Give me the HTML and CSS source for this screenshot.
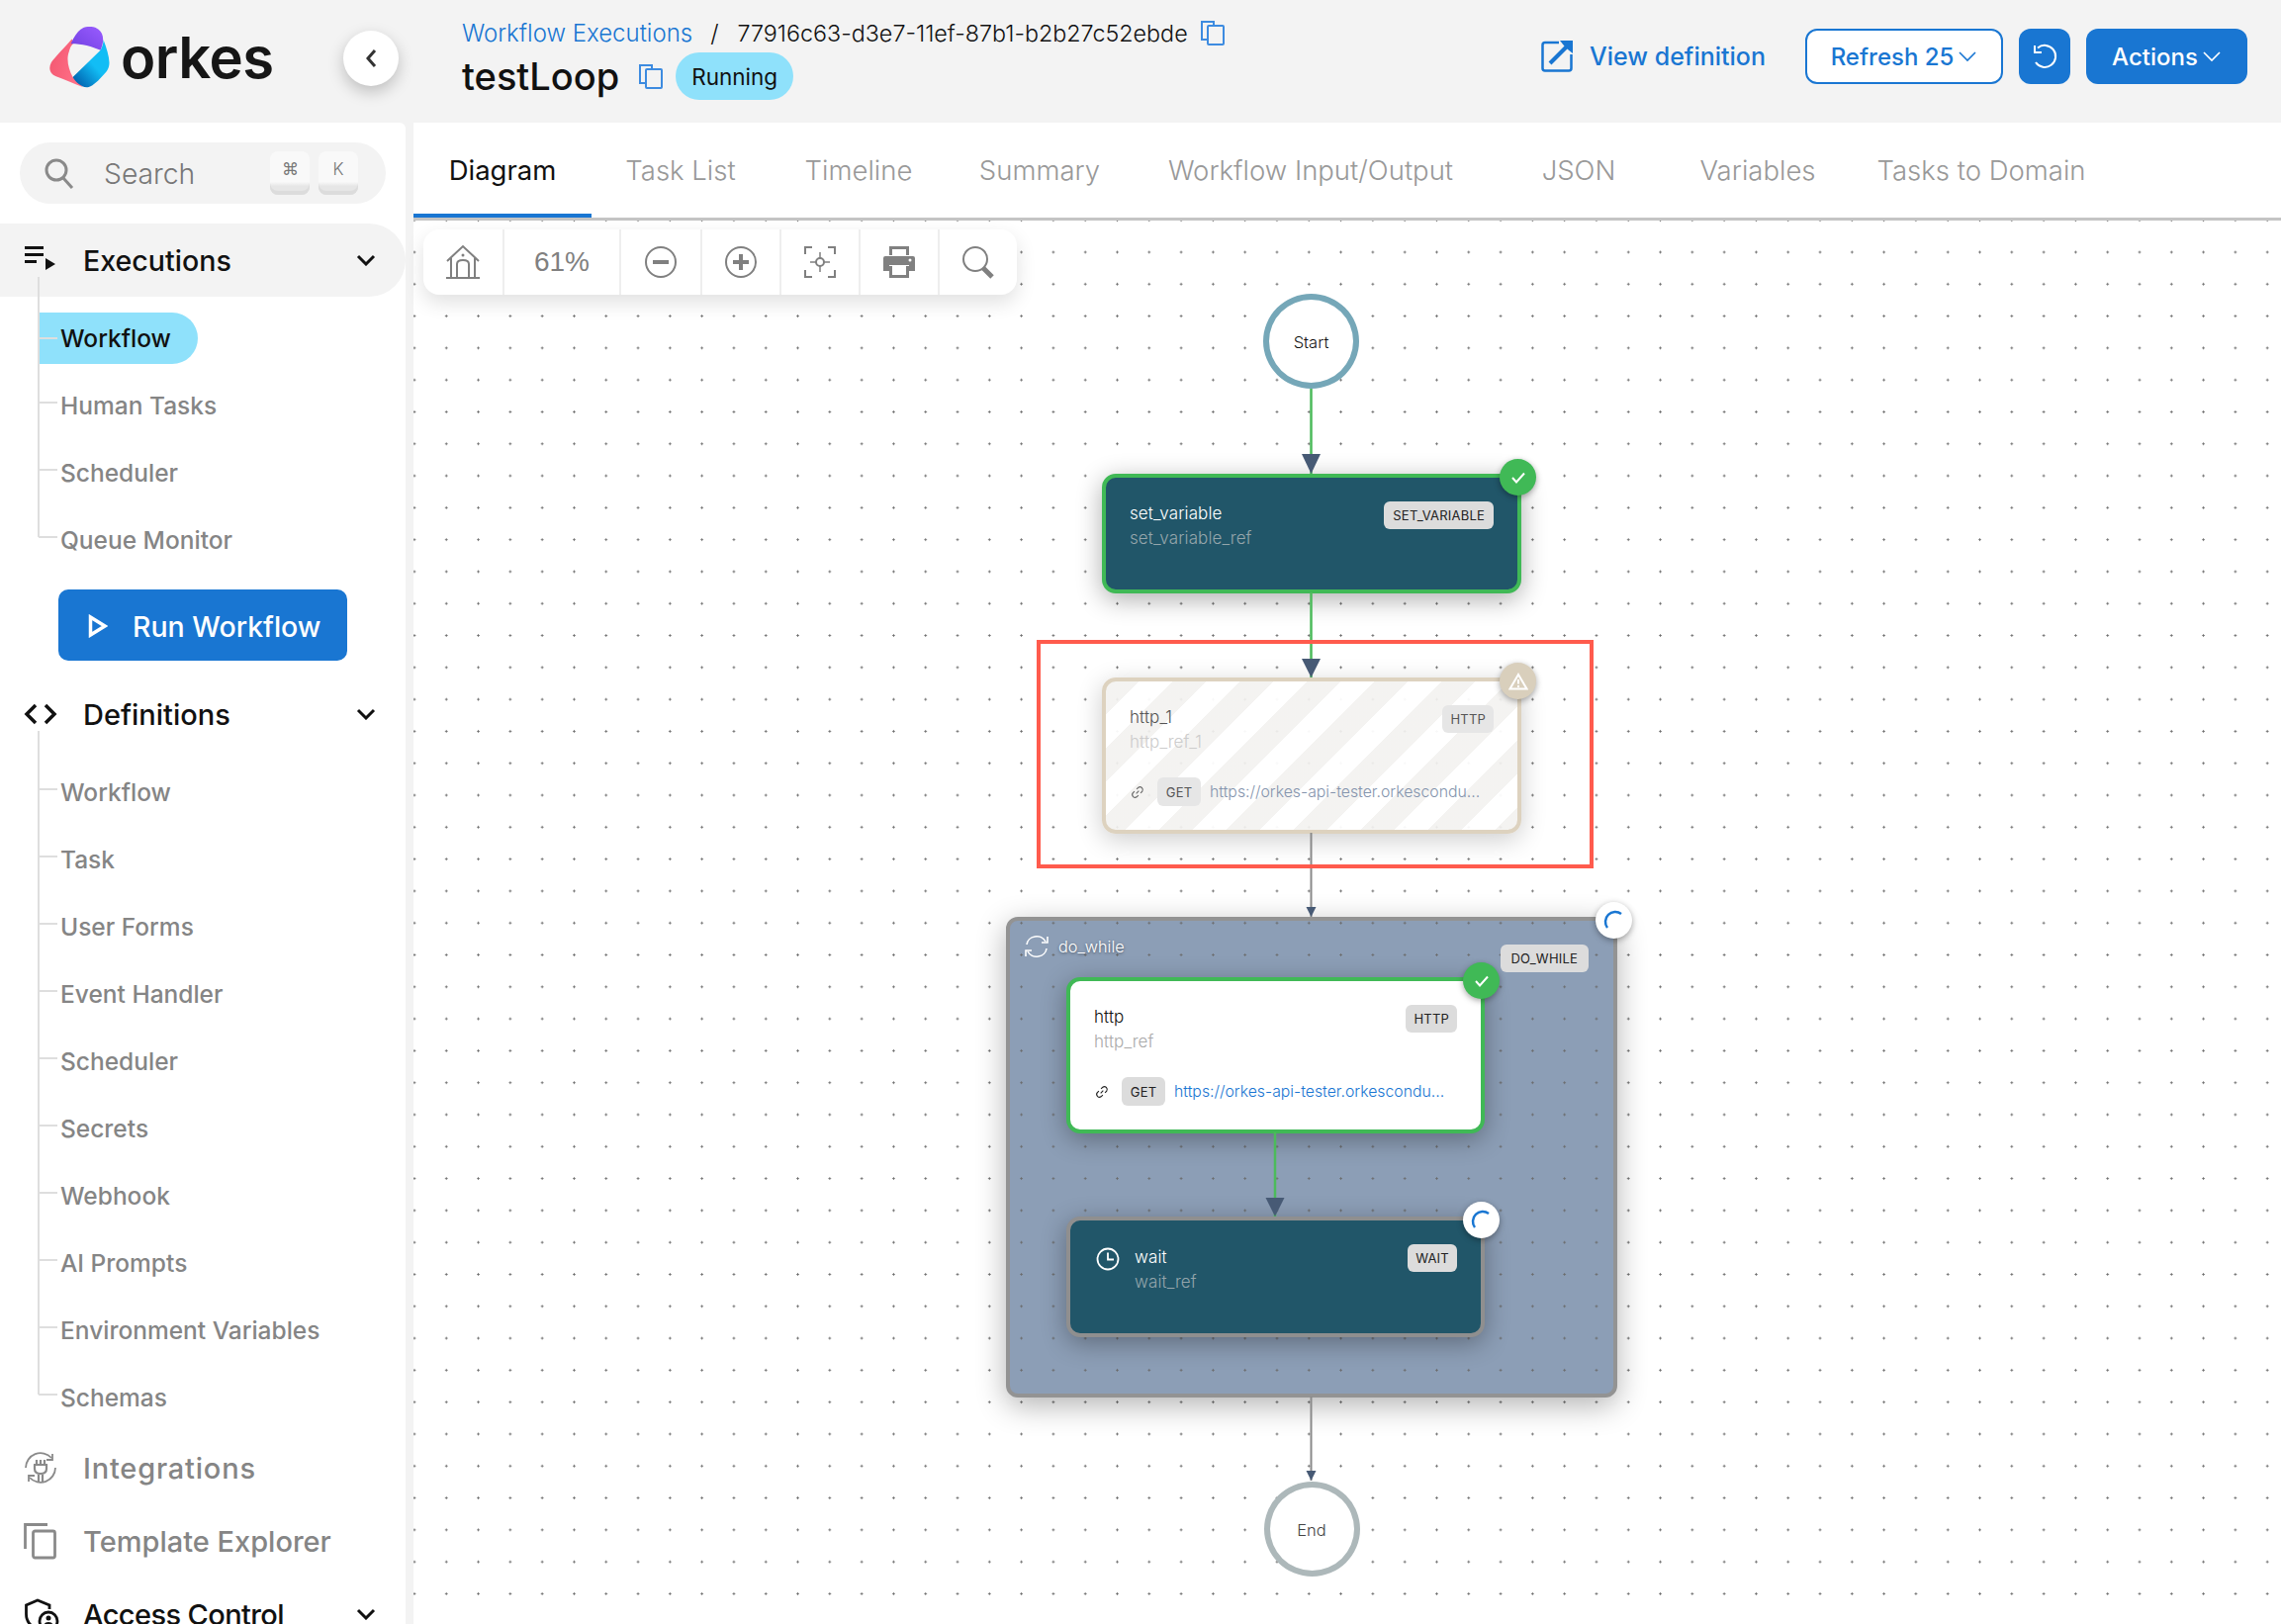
FILE: index.html
```html
<!DOCTYPE html>
<html lang="en">
<head>
    <meta charset="UTF-8">
    <meta name="viewport" content="width=device-width, initial-scale=1.0">
    <title>testLoop - Workflow Executions</title>
    <link rel="stylesheet" href="styles.css">
</head>
<body>
    <!-- Header -->
    <div class="header">
        <div class="brand">
            <svg class="logo-mark" viewBox="30 20 184 188">
                <defs>
                    <linearGradient id="logoPink" x1="0" y1="0" x2="1" y2="0.4"><stop offset="0" stop-color="#f2566f"/><stop offset="1" stop-color="#ff6f87"/></linearGradient>
                    <linearGradient id="logoPurple" x1="0" y1="1" x2="1" y2="0"><stop offset="0" stop-color="#6f3fe0"/><stop offset="1" stop-color="#9a5cff"/></linearGradient>
                    <linearGradient id="logoBlue" x1="0.8" y1="0.3" x2="0.2" y2="1"><stop offset="0.35" stop-color="#12bdf5"/><stop offset="1" stop-color="#0063b0"/></linearGradient>
                </defs>
                <path fill="url(#logoPink)" d="M98 58C72 88 46 114 35 130C26 146 30 165 50 172C80 183 105 195 132 205L101 175C88 150 80 120 90 95C92 88 96 75 105 70Z"/>
                <path fill="url(#logoBlue)" d="M195 60C205 85 212 110 213 130C213 148 205 158 195 168C180 185 165 200 150 205C130 210 110 190 101 175L186 92C192 80 195 70 195 60Z"/>
                <path fill="url(#logoPurple)" d="M95 72C105 50 115 35 125 28C140 17 165 17 180 28C195 40 199 62 186 92C160 80 130 72 95 72Z"/>
            </svg>
            <span class="logo-text">orkes</span>
        </div>
        <button class="collapse-btn">
            <svg width="14" height="22" viewBox="0 0 14 22" fill="none" stroke="#333" stroke-width="3"><path d="M11 3L4 11L11 19"/></svg>
        </button>
        <div class="title-block">
            <div class="breadcrumb">
                <a href="#">Workflow Executions</a>
                <span class="slash">/</span>
                <span class="run-id">77916c63-d3e7-11ef-87b1-b2b27c52ebde</span>
                <svg class="copy-icon" viewBox="0 0 26 26" fill="none" stroke="#3d8be0" stroke-width="2"><path d="M7 20H2V2H14V6"/><rect x="8" y="6" width="16" height="19" rx="1"/></svg>
            </div>
            <div class="title-row">
                <h1>testLoop</h1>
                <svg class="copy-icon" viewBox="0 0 26 26" fill="none" stroke="#3d8be0" stroke-width="2"><path d="M7 20H2V2H14V6"/><rect x="8" y="6" width="16" height="19" rx="1"/></svg>
                <span class="status-pill">Running</span>
            </div>
        </div>
        <div class="header-actions">
            <a class="view-def" href="#">
                <svg width="32" height="32" viewBox="0 0 32 32" fill="none" stroke="#1976d2" stroke-width="2.5"><path d="M18 2H4Q1.5 2 1.5 4.5V28Q1.5 30.5 4 30.5H28Q30.500 30.500 30.500 28V14"/><path stroke-width="4" d="M9 23L27 5"/><path fill="#1976d2" stroke="none" d="M19 0H32V13L27 9L23 5Z"/></svg>
                View definition
            </a>
            <button class="btn btn-outline">Refresh 25<svg class="btn-chevron" viewBox="0 0 20 12" fill="none" stroke="#1976d2" stroke-width="1.6"><path d="M2 2L10 10L18 2"/></svg></button>
            <button class="btn btn-primary btn-icon">
                <svg width="28" height="28" viewBox="0 0 28 28" fill="none" stroke="#fff" stroke-width="2"><path d="M7 5.500A11 11 0 1 1 5 20"/><path d="M4 3V10H11"/></svg>
            </button>
            <button class="btn btn-primary btn-actions">Actions<svg class="btn-chevron" viewBox="0 0 20 12" fill="none" stroke="#fff" stroke-width="1.6"><path d="M2 2L10 10L18 2"/></svg></button>
        </div>
    </div>

    <div class="page">
        <!-- Sidebar -->
        <div class="sidebar">
            <div class="search">
                <svg width="32" height="32" viewBox="0 0 32 32" fill="none" stroke="#8a8a8a" stroke-width="3"><circle cx="13" cy="13" r="10"/><path d="M20 21L29 31"/></svg>
                <span class="search-label">Search</span>
                <span class="kbd kbd-first">⌘</span>
                <span class="kbd">K</span>
            </div>

            <div class="nav-row nav-open">
                <svg class="nav-icon" viewBox="0 0 32 32"><path fill="#111" d="M0 2H19V5H0ZM0 9H19V12H0ZM0 16H12V19H0ZM21 14L31 20L21 26Z"/></svg>
                <span>Executions</span>
                <svg class="nav-chevron" viewBox="0 0 20 12" fill="none" stroke="#111" stroke-width="3"><path d="M2 2L10 10L18 2"/></svg>
            </div>
            <div class="subnav">
                <div class="subnav-item active"><span>Workflow</span></div>
                <div class="subnav-item"><span>Human Tasks</span></div>
                <div class="subnav-item"><span>Scheduler</span></div>
                <div class="subnav-item"><span>Queue Monitor</span></div>
            </div>

            <button class="run-btn">
                <svg width="20" height="24" viewBox="0 0 20 24" fill="none" stroke="#fff" stroke-width="3.500"><path d="M2.500 3L17 12L2.500 21Z"/></svg>
                Run Workflow
            </button>

            <div class="nav-row nav-definitions">
                <svg class="nav-icon" viewBox="0 0 32 32" fill="none" stroke="#111" stroke-width="3.500"><path d="M11 7L2 16L11 25M21 7L30 16L21 25"/></svg>
                <span>Definitions</span>
                <svg class="nav-chevron" viewBox="0 0 20 12" fill="none" stroke="#111" stroke-width="3"><path d="M2 2L10 10L18 2"/></svg>
            </div>
            <div class="subnav">
                <div class="subnav-item"><span>Workflow</span></div>
                <div class="subnav-item"><span>Task</span></div>
                <div class="subnav-item"><span>User Forms</span></div>
                <div class="subnav-item"><span>Event Handler</span></div>
                <div class="subnav-item"><span>Scheduler</span></div>
                <div class="subnav-item"><span>Secrets</span></div>
                <div class="subnav-item"><span>Webhook</span></div>
                <div class="subnav-item"><span>AI Prompts</span></div>
                <div class="subnav-item"><span>Environment Variables</span></div>
                <div class="subnav-item"><span>Schemas</span></div>
            </div>

            <div class="nav-row nav-muted">
                <svg class="nav-icon" viewBox="0 0 32 32" fill="none" stroke="#8a8a8a" stroke-width="1.800"><path d="M1 16A15 15 0 0 1 27 6"/><path d="M31 16A15 15 0 0 1 5 26"/><path d="M28 2V8H22M4 30V24H10"/><path stroke-width="2.200" d="M9 13H23M12 8V13M16 8V13M20 8V13M10 13V17Q10 22 16 22Q22 22 22 17V13M14 22V31M18 22V31"/></svg>
                <span class="nav-wide">Integrations</span>
            </div>
            <div class="nav-row nav-muted">
                <svg class="nav-icon" viewBox="0 0 32 32" fill="none" stroke="#8a8a8a" stroke-width="2.800"><path d="M0.500 24V-0.500H23"/><rect x="8.500" y="6" width="22" height="27" rx="2"/></svg>
                <span>Template Explorer</span>
            </div>
            <div class="nav-row">
                <svg class="nav-icon" viewBox="0 0 32 32" fill="none" stroke="#111" stroke-width="2.800"><path d="M25 11V7L13 2L1.500 7V16Q1.500 25 10 30"/><circle cx="24" cy="23" r="9"/><circle cx="24" cy="20" r="2.500" fill="#111" stroke="none"/><path fill="#111" stroke="none" d="M19 29Q19 24 24 24Q29 24 29 29Z"/></svg>
                <span class="nav-narrow">Access Control</span>
                <svg class="nav-chevron" viewBox="0 0 20 12" fill="none" stroke="#111" stroke-width="3"><path d="M2 2L10 10L18 2"/></svg>
            </div>
        </div>

        <!-- Main area -->
        <div class="main">
            <div class="tabs">
                <div class="tab active">Diagram</div>
                <div class="tab">Task List</div>
                <div class="tab">Timeline</div>
                <div class="tab">Summary</div>
                <div class="tab">Workflow Input/Output</div>
                <div class="tab">JSON</div>
                <div class="tab">Variables</div>
                <div class="tab">Tasks to Domain</div>
            </div>

            <div class="canvas">
                <!-- Diagram toolbar -->
                <div class="toolbar">
                    <div class="tool tool-home">
                        <svg width="36" height="36" viewBox="0 0 36 36" fill="none" stroke="#808080" stroke-width="2"><path d="M2 17L18 2L34 17"/><path d="M6 14V33M30 14V33M1 34H35M12 33V20Q12 16 18 16Q24 16 24 20V33"/><circle cx="18" cy="11" r="1.500" fill="#808080" stroke="none"/></svg>
                    </div>
                    <div class="tool tool-zoom">61%</div>
                    <div class="tool tool-wide">
                        <svg width="34" height="34" viewBox="0 0 34 34" fill="none" stroke="#808080" stroke-width="2"><circle cx="17" cy="17" r="15"/><path stroke-width="4" d="M9 17H25"/></svg>
                    </div>
                    <div class="tool">
                        <svg width="34" height="34" viewBox="0 0 34 34" fill="none" stroke="#808080" stroke-width="2"><circle cx="17" cy="17" r="15"/><path stroke-width="4" d="M9 17H25M17 9V25"/></svg>
                    </div>
                    <div class="tool">
                        <svg width="34" height="34" viewBox="0 0 34 34" fill="none" stroke="#808080" stroke-width="2"><path d="M2 9V2H9M25 2H32V9M2 25V32H9M25 32H32V25"/><circle cx="17" cy="17" r="4"/><path stroke-width="1.500" d="M17 7V13M17 21V27M7 17H13M21 17H27"/></svg>
                    </div>
                    <div class="tool">
                        <svg width="34" height="34" viewBox="0 0 34 34"><path fill="#808080" d="M7 1H27V10H24V4H10V10H7ZM3 11H31Q33 11 33 13V26H27V20H7V26H1V13Q1 11 3 11Z"/><path fill="none" stroke="#808080" stroke-width="3" d="M8.500 21V31.500H25.500V21"/><circle cx="28" cy="15" r="1.500" fill="#fff"/></svg>
                    </div>
                    <div class="tool tool-last">
                        <svg width="34" height="34" viewBox="0 0 34 34" fill="none" stroke="#808080" stroke-width="2"><circle cx="14" cy="14" r="12"/><path stroke-width="5" d="M22 23L31 32"/></svg>
                    </div>
                </div>

                <!-- Terminal nodes -->
                <div class="terminal terminal-start">Start</div>
                <div class="terminal terminal-end">End</div>

                <!-- set_variable -->
                <div class="node node-dark node-done node-set">
                    <div class="node-head">
                        <div>
                            <div class="node-name">set_variable</div>
                            <div class="node-ref">set_variable_ref</div>
                        </div>
                        <span class="badge">SET_VARIABLE</span>
                    </div>
                    <span class="status status-done">
                        <svg width="16" height="14" viewBox="0 0 16 14" fill="none" stroke="#fff" stroke-width="2"><path d="M2 7L6 11.500L14 2.500"/></svg>
                    </span>
                </div>

                <!-- http_1, skipped -->
                <div class="node node-skipped node-http1">
                    <div class="node-head">
                        <div>
                            <div class="node-name">http_1</div>
                            <div class="node-ref">http_ref_1</div>
                        </div>
                        <span class="badge">HTTP</span>
                    </div>
                    <div class="node-link">
                        <svg class="link-icon" viewBox="0 0 16 16" fill="none" stroke="#666" stroke-width="1.300"><path d="M6.500 9.500L9.500 6.500"/><path d="M7 4.500L9 2.500Q11 1 13 2.800Q15 5 13.500 7L11.500 9"/><path d="M9 11.500L7 13.500Q5 15 3 13.200Q1 11 2.500 9L4.500 7"/></svg>
                        <span class="badge">GET</span>
                        <span class="node-url">https://orkes-api-tester.orkescondu...</span>
                    </div>
                    <span class="status status-warn">
                        <svg width="20" height="18" viewBox="0 0 20 18" fill="none" stroke="#fff" stroke-width="2"><path d="M10 2L18.500 16.500H1.500Z"/><path d="M10 7V11.500M10 13V15"/></svg>
                    </span>
                </div>

                <!-- do_while container -->
                <div class="node-loop">
                    <div class="loop-title">
                        <svg width="26" height="24" viewBox="0 0 26 24" fill="none" stroke="#fff" stroke-width="1.600"><path d="M3 10A10 9 0 0 1 22 7M23 14A10 9 0 0 1 4 17"/><path d="M24 2V8H18M2 22V16H8"/></svg>
                        <span>do_while</span>
                    </div>
                    <span class="badge">DO_WHILE</span>
                    <span class="status status-run">
                        <svg width="22" height="22" viewBox="0 0 22 22" fill="none" stroke="#1976d2" stroke-width="2.500"><path d="M4 18A10 10 0 0 1 18 4"/></svg>
                    </span>
                </div>

                <!-- http -->
                <div class="node node-done node-http">
                    <div class="node-head">
                        <div>
                            <div class="node-name">http</div>
                            <div class="node-ref">http_ref</div>
                        </div>
                        <span class="badge">HTTP</span>
                    </div>
                    <div class="node-link">
                        <svg class="link-icon" viewBox="0 0 16 16" fill="none" stroke="#222" stroke-width="1.300"><path d="M6.500 9.500L9.500 6.500"/><path d="M7 4.500L9 2.500Q11 1 13 2.800Q15 5 13.500 7L11.500 9"/><path d="M9 11.500L7 13.500Q5 15 3 13.200Q1 11 2.500 9L4.500 7"/></svg>
                        <span class="badge">GET</span>
                        <span class="node-url">https://orkes-api-tester.orkescondu...</span>
                    </div>
                    <span class="status status-done">
                        <svg width="16" height="14" viewBox="0 0 16 14" fill="none" stroke="#fff" stroke-width="2"><path d="M2 7L6 11.500L14 2.500"/></svg>
                    </span>
                </div>

                <!-- wait -->
                <div class="node node-dark node-wait">
                    <div class="node-head">
                        <div class="node-with-icon">
                            <svg width="24" height="24" viewBox="0 0 24 24" fill="none" stroke="#fff" stroke-width="1.800"><circle cx="12" cy="12" r="10.500"/><path d="M12 5.500V12.500H18"/></svg>
                            <div>
                                <div class="node-name">wait</div>
                                <div class="node-ref">wait_ref</div>
                            </div>
                        </div>
                        <span class="badge">WAIT</span>
                    </div>
                    <span class="status status-run">
                        <svg width="22" height="22" viewBox="0 0 22 22" fill="none" stroke="#1976d2" stroke-width="2.500"><path d="M4 18A10 10 0 0 1 18 4"/></svg>
                    </span>
                </div>

                <!-- Edges -->
                <svg class="edges" viewBox="0 0 1888 1419">
                    <g stroke-width="2.500" stroke="#4cbb5b">
                        <path d="M907.500 170V256M907.500 376V462M871 922V1007"/>
                    </g>
                    <g stroke-width="2" stroke="#8a8a8a">
                        <path d="M907.500 619V704M907.500 1189V1274"/>
                    </g>
                    <g fill="#475a75">
                        <path d="M898 236H917L907.500 256Z"/>
                        <path d="M898 443H917L907.500 462Z"/>
                        <path d="M902.500 694H912.500L907.500 704Z"/>
                        <path d="M861.500 988H880.500L871 1007Z"/>
                        <path d="M902.500 1264H912.500L907.500 1274Z"/>
                    </g>
                </svg>

                <!-- Highlight box -->
                <div class="highlight"></div>
            </div>
        </div>
    </div>
</body>
</html>
```

FILE: styles.css
```css
:root {
    --dots: radial-gradient(circle, #6a6a6a 0.9px, transparent 1.3px);
    --blue: #1976d2;
}

* {
    box-sizing: border-box;
}

body {
    margin: 0;
    height: 1642px;
    overflow: hidden;
    background-color: #f3f3f3;
    font-family: Inter, "Liberation Sans", sans-serif;
    color: #111;
}

/* Header */
.header {
    display: flex;
    align-items: center;
    height: 124px;
    padding: 0 34px 8px 50px;
}

.brand {
    display: flex;
    align-items: center;
    gap: 11px;
    width: 297px;
}

.logo-mark {
    width: 61px;
    height: 62px;
}

.logo-text {
    font-size: 58px;
    font-weight: 600;
    line-height: 62px;
    color: #161616;
    letter-spacing: -0.5px;
}

.collapse-btn {
    display: flex;
    align-items: center;
    justify-content: center;
    width: 56px;
    height: 56px;
    margin: 2px 64px 0 0;
    padding: 0;
    border: none;
    border-radius: 50%;
    background-color: #fff;
    box-shadow: 0 6px 16px rgba(0, 0, 0, 0.22);
}

.title-block {
    flex: 1;
    margin-top: 3px;
}

.breadcrumb {
    display: flex;
    align-items: center;
    height: 30px;
    margin-bottom: 5px;
    font-size: 24px;
    font-weight: 300;
}

.breadcrumb a {
    color: var(--blue);
    text-decoration: none;
}

.slash {
    margin: 0 19px 0 18px;
}

.run-id {
    font-size: 23.3px;
}

.copy-icon {
    width: 26px;
    height: 26px;
}

.breadcrumb .copy-icon {
    margin-left: 12px;
}

.title-row {
    display: flex;
    align-items: center;
    height: 48px;
}

h1 {
    margin: 0 19px 0 0;
    font-size: 38px;
    font-weight: 500;
}

.status-pill {
    display: flex;
    align-items: center;
    height: 48px;
    margin-left: 12px;
    padding: 0 16px;
    border-radius: 24px;
    background-color: #8fe1fb;
    font-size: 22.5px;
}

.header-actions {
    display: flex;
    align-items: center;
    gap: 16px;
    margin-top: -2px;
}

.view-def {
    display: flex;
    align-items: center;
    gap: 17px;
    margin-right: 24px;
    color: var(--blue);
    text-decoration: none;
    font-size: 25px;
    font-weight: 500;
}

.btn {
    display: flex;
    align-items: center;
    justify-content: center;
    gap: 4px;
    height: 56px;
    padding: 0;
    border-radius: 12px;
    font-family: inherit;
    font-size: 24px;
    font-weight: 500;
}

.btn-outline {
    width: 200px;
    border: 2px solid var(--blue);
    background-color: #fff;
    color: var(--blue);
}

.btn-primary {
    border: none;
    background-color: var(--blue);
    color: #fff;
}

.btn-icon {
    width: 52px;
}

.btn-actions {
    width: 163px;
}

.btn-chevron {
    width: 20px;
    height: 12px;
}

/* Page layout */
.page {
    display: flex;
    gap: 8px;
    height: 1518px;
}

/* Sidebar */
.sidebar {
    width: 410px;
    padding-top: 20px;
    overflow: hidden;
    background-color: #fff;
    border-radius: 0 6px 0 0;
}

.search {
    display: flex;
    align-items: center;
    height: 62px;
    margin: 0 20px;
    padding-left: 24px;
    border-radius: 31px;
    background-color: #f3f3f3;
}

.search-label {
    flex: 1;
    margin-left: 29px;
    padding-top: 2px;
    font-size: 28.3px;
    font-weight: 300;
    color: #777;
}

.kbd {
    display: flex;
    align-items: center;
    justify-content: center;
    width: 40px;
    height: 44px;
    margin-right: 28px;
    padding-bottom: 8px;
    border-radius: 8px;
    background: linear-gradient(#f9f9f9 70%, #e6e6e6 80%);
    box-shadow: inset 0 -4px 0 #dcdcdc;
    font-size: 17px;
    font-weight: 300;
    color: #777;
}

.kbd-first {
    margin-right: 9px;
    font-family: "DejaVu Sans", sans-serif;
}

.nav-row {
    display: flex;
    align-items: center;
    height: 74px;
    padding: 0 30px 0 25px;
    font-size: 29px;
    font-weight: 500;
}

.nav-open {
    margin-top: 20px;
    border-radius: 0 37px 37px 0;
    background-color: #f3f3f3;
    font-size: 28.6px;
}

.nav-definitions {
    margin-top: 17px;
}

.nav-muted {
    color: #858585;
}

.nav-wide {
    letter-spacing: 0.8px;
}

.nav-narrow {
    letter-spacing: -0.6px;
}

.nav-icon {
    flex: none;
    width: 32px;
    height: 32px;
    margin-right: 27px;
    overflow: visible;
}

.nav-chevron {
    width: 20px;
    height: 12px;
    margin-left: auto;
}

.subnav {
    position: relative;
    margin-top: 8px;
}

.subnav::before {
    content: "";
    position: absolute;
    left: 38px;
    top: -28px;
    bottom: 37px;
    width: 2px;
    background-color: #dedede;
}

.subnav-item {
    position: relative;
    display: flex;
    align-items: center;
    height: 68px;
    margin-left: 40px;
    font-size: 24.5px;
    font-weight: 500;
    color: #858585;
}

.subnav-item::before {
    content: "";
    position: absolute;
    left: -1px;
    top: 30px;
    width: 19px;
    height: 2px;
    background-color: #dedede;
}

.subnav-item span {
    padding-left: 21px;
}

.subnav-item.active span {
    display: flex;
    align-items: center;
    height: 52px;
    padding-right: 27px;
    border-radius: 0 26px 26px 0;
    background-color: #8fe1fb;
    color: #111;
}

.subnav-item.active::before {
    top: 33px;
}

.run-btn {
    display: flex;
    align-items: center;
    gap: 25px;
    width: 292px;
    height: 72px;
    margin: 16px 0 0 59px;
    padding: 2px 0 0 30px;
    border: none;
    border-radius: 10px;
    background-color: var(--blue);
    color: #fff;
    font-family: inherit;
    font-size: 28.5px;
    font-weight: 500;
}

/* Main */
.main {
    display: flex;
    flex-direction: column;
    flex: 1;
    background-color: #fff;
}

.tabs {
    display: grid;
    grid-template-columns: 180px 180px 180px 186px 362px 180px 182px 270px;
    height: 99px;
    border-bottom: 3px solid #c4c4c4;
}

.tab {
    height: 96px;
    padding-top: 31px;
    text-align: center;
    font-size: 27.5px;
    font-weight: 300;
    color: #999;
}

.tab.active {
    border-bottom: 4px solid var(--blue);
    font-weight: 400;
    color: #111;
}

.canvas {
    position: relative;
    flex: 1;
    background-image: var(--dots);
    background-size: 32.3px 32.3px;
    background-position: 15.25px 12.75px;
    background-attachment: fixed;
}

.toolbar {
    position: absolute;
    left: 10px;
    top: 9px;
    display: flex;
    height: 66px;
    border-radius: 16px;
    background-color: #fff;
    box-shadow: 0 8px 20px rgba(0, 0, 0, 0.12);
}

.tool {
    display: flex;
    align-items: center;
    justify-content: center;
    width: 80px;
    border-right: 2px solid #eee;
}

.tool-home {
    width: 82px;
}

.tool-zoom {
    width: 118px;
    font-family: "Liberation Sans", sans-serif;
    font-size: 28px;
    color: #808080;
}

.tool-wide {
    width: 82px;
}

.tool-last {
    width: 78px;
    border-right: none;
}

/* Diagram nodes */
.terminal {
    position: absolute;
    display: flex;
    align-items: center;
    justify-content: center;
    width: 97px;
    height: 96px;
    padding-top: 2px;
    border: 6px solid #75a7b8;
    border-radius: 50%;
    background-color: #fff;
    font-size: 16.5px;
    font-weight: 300;
}

.terminal-start {
    left: 859px;
    top: 74px;
}

.terminal-end {
    left: 859.5px;
    top: 1275px;
    border-color: #adb8ba;
    color: #444;
}

.node {
    position: absolute;
    padding: 24px;
    border: 4px solid #8f8f8f;
    border-radius: 14px;
    background-color: #fff;
    box-shadow: 0 6px 26px rgba(0, 0, 0, 0.32);
    font-weight: 300;
}

.node-dark {
    background-color: #215669;
    color: #fff;
}

.node-done {
    border-color: #40b956;
}

.node-skipped {
    border-color: #ddd2bf;
    background: repeating-linear-gradient(135deg, rgba(243, 242, 240, 0.92) 0 24px, rgba(255, 255, 255, 0.95) 24px 48px);
    box-shadow: 0 6px 26px rgba(0, 0, 0, 0.2);
    color: #555;
}

.node-set {
    left: 696px;
    top: 256px;
    width: 424px;
    height: 121px;
}

.node-http1 {
    left: 696px;
    top: 462px;
    width: 424px;
    height: 158px;
}

.node-http {
    left: 660px;
    top: 765px;
    width: 423px;
    height: 158px;
}

.node-wait {
    left: 660px;
    top: 1007px;
    width: 423px;
    height: 122px;
}

.node-head {
    display: flex;
    justify-content: space-between;
    align-items: flex-start;
    height: 48px;
}

.node-with-icon {
    display: flex;
    align-items: flex-start;
    gap: 15px;
    padding: 3px 0 0 2px;
}

.node-with-icon > div {
    margin-top: -2px;
}

.node-name,
.node-ref {
    height: 24px;
    font-size: 17px;
    line-height: 24px;
    letter-spacing: 0.1px;
}

.node-ref {
    margin-top: 1px;
    color: #94a5ab;
}

.node-http .node-ref {
    color: #aaa;
}

.node-http1 .node-ref {
    color: #ccc;
}

.badge {
    display: flex;
    align-items: center;
    justify-content: center;
    height: 28px;
    padding: 0 8px;
    border-radius: 6px;
    background-color: #dcdcdc;
    color: #222;
    font-size: 13px;
    font-weight: 400;
    letter-spacing: 0.2px;
}

.node-set .badge {
    padding: 0 9px;
}

.node-loop .badge {
    padding: 0 11px;
}

.node-http1 .badge {
    background-color: #e6e6e6;
    color: #555;
}

.node-head .badge {
    min-width: 50px;
}

.node-link {
    display: flex;
    align-items: center;
    height: 29px;
    margin-top: 25px;
}

.node-link .badge {
    width: 44px;
    height: 29px;
    margin: 0 9px 0 13px;
}

.link-icon {
    width: 14px;
    height: 14px;
    margin-left: 1px;
}

.node-url {
    font-size: 15.8px;
    color: var(--blue);
}

.node-http1 .node-url {
    color: #8494ad;
}

.status {
    position: absolute;
    right: -19px;
    top: -19px;
    display: flex;
    align-items: center;
    justify-content: center;
    width: 37px;
    height: 37px;
    border-radius: 50%;
    box-shadow: 0 2px 6px rgba(0, 0, 0, 0.35);
}

.status-done {
    background-color: #40b956;
}

.status-warn {
    background-color: #d9cfbc;
}

.status-run {
    background-color: #fff;
}

.node-loop {
    position: absolute;
    left: 599px;
    top: 704px;
    display: flex;
    justify-content: space-between;
    align-items: flex-start;
    width: 618px;
    height: 486px;
    padding: 24px 25px 0 14px;
    border: 4px solid #939393;
    border-radius: 12px;
    background-color: #8c9eb6;
    background-image: var(--dots);
    background-size: 32.3px 32.3px;
    background-position: 15.25px 12.75px;
    background-attachment: fixed;
    box-shadow: 0 8px 30px rgba(0, 0, 0, 0.3);
}

.loop-title {
    display: flex;
    align-items: center;
    gap: 9px;
    margin-top: -10px;
    color: #fff;
    font-size: 16.3px;
    font-weight: 300;
    text-shadow: 0 1px 3px rgba(0, 0, 0, 0.5);
}

.edges {
    position: absolute;
    left: 0;
    top: 0;
    width: 1888px;
    height: 1419px;
    pointer-events: none;
}

.highlight {
    position: absolute;
    left: 630px;
    top: 424px;
    width: 563px;
    height: 231px;
    border: 4px solid #ff5b4d;
}
```
